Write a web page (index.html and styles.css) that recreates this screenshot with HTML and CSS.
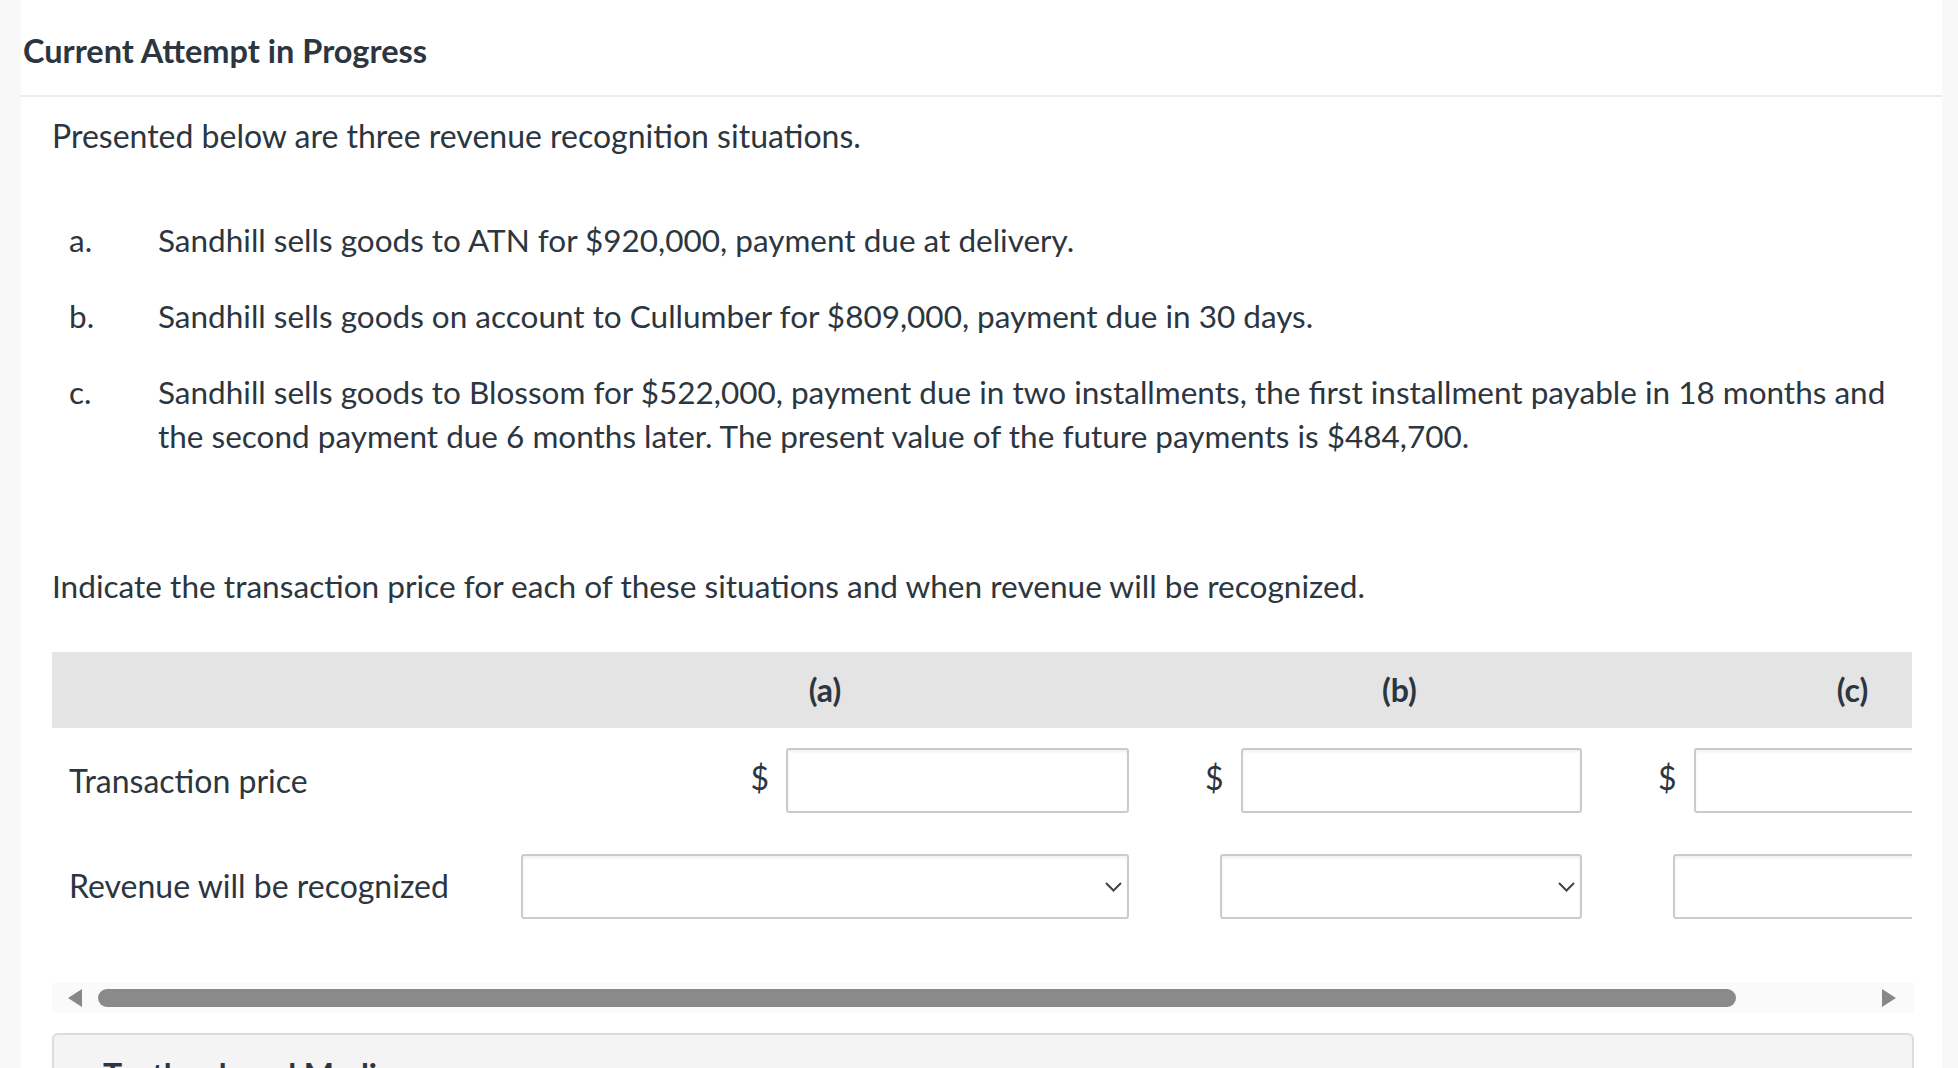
FILE: index.html
```html
<!DOCTYPE html>
<html lang="en">
<head>
    <meta charset="UTF-8">
    <meta name="viewport" content="width=device-width, initial-scale=1.0">
    <title>Current Attempt in Progress</title>
    <link rel="stylesheet" href="styles.css">
</head>
<body>
    <div class="page">
        <h2 class="attempt-title">Current Attempt in Progress</h2>

        <div class="question">
            <p class="intro">Presented below are three revenue recognition situations.</p>

            <ol class="situations">
                <li><span class="marker">a.</span><span class="text">Sandhill sells goods to ATN for $920,000, payment due at delivery.</span></li>
                <li><span class="marker">b.</span><span class="text">Sandhill sells goods on account to Cullumber for $809,000, payment due in 30 days.</span></li>
                <li><span class="marker">c.</span><span class="text">Sandhill sells goods to Blossom for $522,000, payment due in two installments, the first installment payable in 18 months and the second payment due 6 months later. The present value of the future payments is $484,700.</span></li>
            </ol>

            <p class="instruction">Indicate the transaction price for each of these situations and when revenue will be recognized.</p>

            <div class="table-scroll">
                <div class="answer-table">
                    <div class="head-cell"></div>
                    <div class="head-cell">(a)</div>
                    <div class="head-cell shifted">(b)</div>
                    <div class="head-cell shifted">(c)</div>

                    <div class="label-cell">Transaction price</div>
                    <div class="cell">
                        <span class="dollar">$</span><input class="amount" type="text">
                    </div>
                    <div class="cell">
                        <span class="dollar">$</span><input class="amount" type="text">
                    </div>
                    <div class="cell">
                        <span class="dollar">$</span><input class="amount" type="text">
                    </div>

                    <div class="label-cell">Revenue will be recognized</div>
                    <div class="cell second">
                        <div class="select-wrap wide">
                            <select><option></option></select>
                            <svg class="chevron" width="17" height="10" viewBox="0 0 17 10"><polyline points="1,1 8.5,8.5 16,1" fill="none" stroke="#444" stroke-width="2"/></svg>
                        </div>
                    </div>
                    <div class="cell second">
                        <div class="select-wrap">
                            <select><option></option></select>
                            <svg class="chevron" width="17" height="10" viewBox="0 0 17 10"><polyline points="1,1 8.5,8.5 16,1" fill="none" stroke="#444" stroke-width="2"/></svg>
                        </div>
                    </div>
                    <div class="cell second">
                        <div class="select-wrap">
                            <select><option></option></select>
                            <svg class="chevron" width="17" height="10" viewBox="0 0 17 10"><polyline points="1,1 8.5,8.5 16,1" fill="none" stroke="#444" stroke-width="2"/></svg>
                        </div>
                    </div>
                </div>
            </div>

            <div class="scroll-track">
                <span class="arrow-left"></span>
                <span class="thumb"></span>
                <span class="arrow-right"></span>
            </div>

            <div class="media-box">Textbook and Media</div>
        </div>
    </div>
</body>
</html>
```

FILE: styles.css
```css
html, body {
    overflow: hidden;
}
body {
    margin: 0;
    padding: 0;
    background: #f8f8f8;
    font-family: 'Lato', 'Liberation Sans', sans-serif;
    color: #2c3640;
}

.page {
    margin-left: 21px;
    width: 1921px;
    min-height: 1200px;
    background: #fff;
}

.attempt-title {
    margin: 0;
    padding: 32px 0 25px 2px;
    font-size: 32.5px;
    line-height: 38px;
    font-weight: bold;
    border-bottom: 2px solid #ececec;
}

.question {
    padding: 17px 28px 0 31px;
    font-size: 32px;
    line-height: 44px;
}

.intro, .instruction {
    margin: 0;
}

.situations {
    list-style: none;
    margin: 60px 0 0 0;
    padding: 0 0 0 17px;
    font-size: 31.5px;
}
.situations li {
    display: flex;
    margin-bottom: 32px;
}
.situations li:last-child { margin-bottom: 0; }
.situations .marker {
    flex: 0 0 89px;
}

.instruction {
    margin-top: 106px;
    font-size: 31.6px;
}

.table-scroll {
    margin-top: 44px;
    width: 1860px;
    overflow: hidden;
}

.answer-table {
    display: grid;
    grid-template-columns: 431px 684px 453px 453px;
    width: 2021px;
}

.head-cell {
    background: #e4e4e4;
    height: 76px;
    display: flex;
    align-items: center;
    justify-content: center;
    font-weight: bold;
}
.head-cell.shifted { padding-left: 12px; }

.label-cell {
    padding-left: 17px;
    display: flex;
    align-items: center;
}

.cell {
    padding: 20px 38px;
    display: flex;
    align-items: center;
    justify-content: flex-end;
}
.cell.second {
    padding-top: 21px;
}

.dollar {
    margin-right: 17px;
    position: relative;
    top: -3px;
}

.amount, .select-wrap select {
    box-sizing: border-box;
    height: 65px;
    border: 2px solid #cbcbcb;
    border-radius: 3px;
    box-shadow: inset 0 2px 3px rgba(0,0,0,0.06);
    background: #fff;
    font-family: inherit;
    font-size: 24px;
}
.amount {
    width: 343px;
}

.select-wrap {
    position: relative;
    width: 362px;
}
.select-wrap.wide { width: 608px; }
.select-wrap select {
    width: 100%;
    appearance: none;
    -webkit-appearance: none;
}
.chevron {
    position: absolute;
    right: 7px;
    top: 28px;
}

/* horizontal scroll bar under the table */
.scroll-track {
    margin-top: 44px;
    width: 1862px;
    height: 30px;
    background: #fafafa;
    display: flex;
    align-items: center;
    padding: 0 18px 0 16px;
    box-sizing: border-box;
}
.arrow-left {
    width: 0;
    height: 0;
    border-top: 9px solid transparent;
    border-bottom: 9px solid transparent;
    border-right: 14px solid #888;
}
.arrow-right {
    width: 0;
    height: 0;
    margin-left: auto;
    border-top: 9px solid transparent;
    border-bottom: 9px solid transparent;
    border-left: 14px solid #888;
}
.thumb {
    margin-left: 16px;
    width: 1638px;
    height: 18px;
    border-radius: 9px;
    background: #8a8a8a;
}

.media-box {
    margin-top: 20px;
    width: 1862px;
    box-sizing: border-box;
    padding: 18px 49px 40px;
    background: #f4f4f4;
    border: 2px solid #dcdcdc;
    border-radius: 6px;
    font-weight: bold;
}
```
